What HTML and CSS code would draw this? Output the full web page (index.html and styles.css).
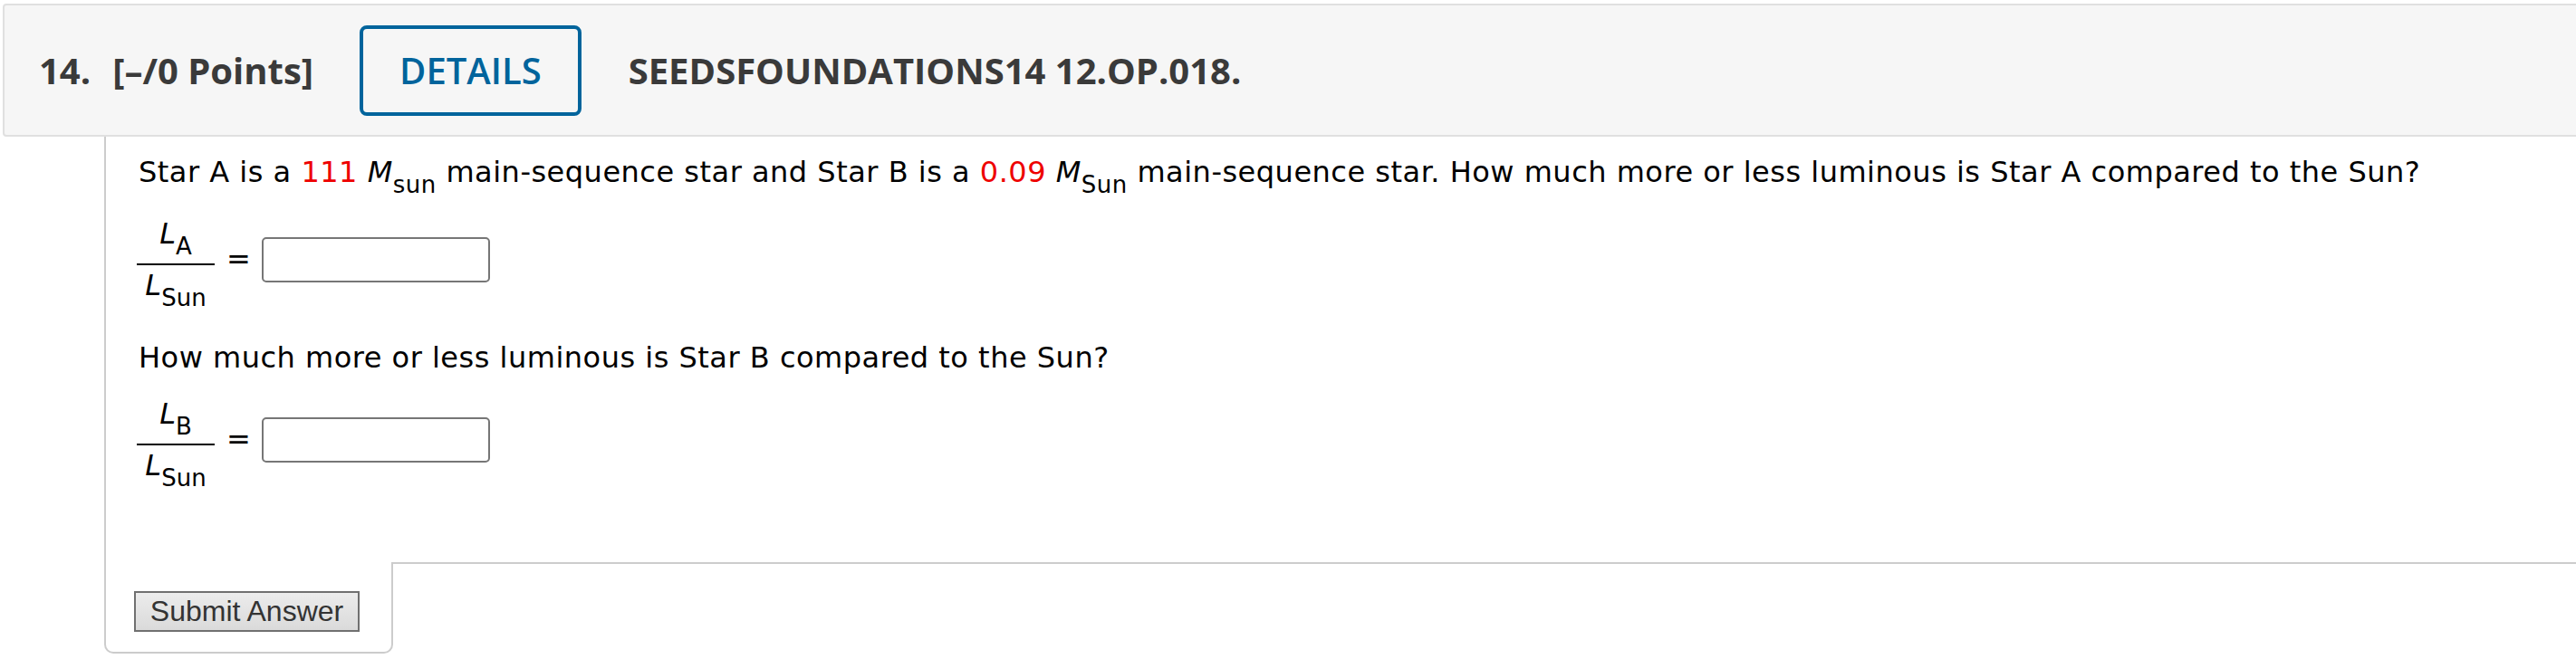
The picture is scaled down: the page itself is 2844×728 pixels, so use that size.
FILE: index.html
```html
<!DOCTYPE html>
<html>
<head>
<meta charset="utf-8">
<link rel="stylesheet" href="styles.css">
</head>
<body>
<div class="page">
  <div class="header">
    <span class="qnum">14.</span>
    <span class="points">[&ndash;/0 Points]</span>
    <button class="details">DETAILS</button>
    <span class="qid">SEEDSFOUNDATIONS14 12.OP.018.</span>
  </div>
  <div class="question">
    <div class="qbody">
      <p class="text">Star A is a <span class="red">111</span> <i class="var">M</i><span class="sub">sun</span> main-sequence star and Star B is a <span class="red">0.09</span> <i class="var">M</i><span class="sub">Sun</span> main-sequence star. How much more or less luminous is Star A compared to the Sun?</p>
      <div class="eq">
        <div class="frac">
          <div class="num"><i class="var">L</i><span class="sub">A</span></div>
          <div class="den"><i class="var">L</i><span class="sub">Sun</span></div>
        </div>
        <span class="equals">=</span>
        <input class="answer" type="text">
      </div>
      <p class="text second">How much more or less luminous is Star B compared to the Sun?</p>
      <div class="eq eq2">
        <div class="frac">
          <div class="num"><i class="var">L</i><span class="sub">B</span></div>
          <div class="den"><i class="var">L</i><span class="sub">Sun</span></div>
        </div>
        <span class="equals">=</span>
        <input class="answer" type="text">
      </div>
    </div>
    <div class="footer">
      <div class="tab"><button class="submit">Submit Answer</button></div>
      <div class="rest"></div>
    </div>
  </div>
</div>
</body>
</html>
```
FILE: styles.css
```css
html, body {
  margin: 0;
  padding: 0;
  background: #ffffff;
  overflow: hidden;
}
.page {
  padding: 4px 0 0 3px;
  width: 2841px;
}
.header {
  display: flex;
  align-items: center;
  height: 147px;
  box-sizing: border-box;
  margin-right: -20px;
  padding-left: 38px;
  background: #f6f6f6;
  border: 2px solid #e0e0e0;
  border-radius: 4px;
  font-family: "Open Sans", "DejaVu Sans", sans-serif;
  font-size: 40px;
  font-weight: 700;
  color: #3a3a3a;
}
.qnum { margin-right: 24px; }
.points { margin-right: 51px; }
.details {
  height: 100px;
  box-sizing: border-box;
  padding: 0 40px;
  border: 4px solid #00649c;
  border-radius: 8px;
  background: transparent;
  color: #00649c;
  font-family: "Open Sans", "DejaVu Sans", sans-serif;
  font-size: 40px;
  font-weight: 600;
  margin-right: 52px;
}
.question {
  margin-left: 112px;
}
.qbody {
  border-left: 2px solid #cccccc;
  padding: 19px 0 77px 36px;
  font-family: "DejaVu Sans", Verdana, sans-serif;
  font-size: 32px;
  color: #000000;
}
.text {
  margin: 0;
  line-height: 40px;
  white-space: nowrap;
  letter-spacing: 0.5px;
}
.second { margin-top: 30px; }
.red { color: #ee0000; }
.var { font-style: italic; }
.sub {
  font-size: 26px;
  line-height: 0;
  vertical-align: -12px;
}
.eq {
  display: flex;
  align-items: flex-start;
  margin-top: 30px;
  margin-left: -2px;
}
.eq2 { margin-top: 24px; }
.frac {
  display: flex;
  flex-direction: column;
  align-items: center;
  width: 86px;
}
.num {
  align-self: stretch;
  text-align: center;
  line-height: 36px;
  padding-bottom: 15px;
  border-bottom: 2px solid #000000;
}
.den {
  line-height: 36px;
  margin-top: 4px;
  padding-bottom: 12px;
}
.equals {
  line-height: 36px;
  margin: 28px 12px 0 13px;
}
.answer {
  margin-top: 22px;
  width: 252px;
  height: 50px;
  box-sizing: border-box;
  border: 2px solid #767676;
  border-radius: 5px;
  background: #ffffff;
}
.footer {
  display: flex;
}
.tab {
  width: 319px;
  box-sizing: border-box;
  height: 101px;
  padding: 32px 0 0 31px;
  border-left: 2px solid #cccccc;
  border-right: 2px solid #cccccc;
  border-bottom: 2px solid #cccccc;
  border-radius: 0 0 10px 10px;
}
.rest {
  flex: 1;
  border-top: 2px solid #cccccc;
}
.submit {
  width: 249px;
  height: 45px;
  box-sizing: border-box;
  padding: 0;
  border: 2px solid #707070;
  border-radius: 0;
  background: linear-gradient(#ececec, #dadada);
  font-family: "Liberation Sans", Arial, sans-serif;
  font-size: 32px;
  color: #333333;
}
```
